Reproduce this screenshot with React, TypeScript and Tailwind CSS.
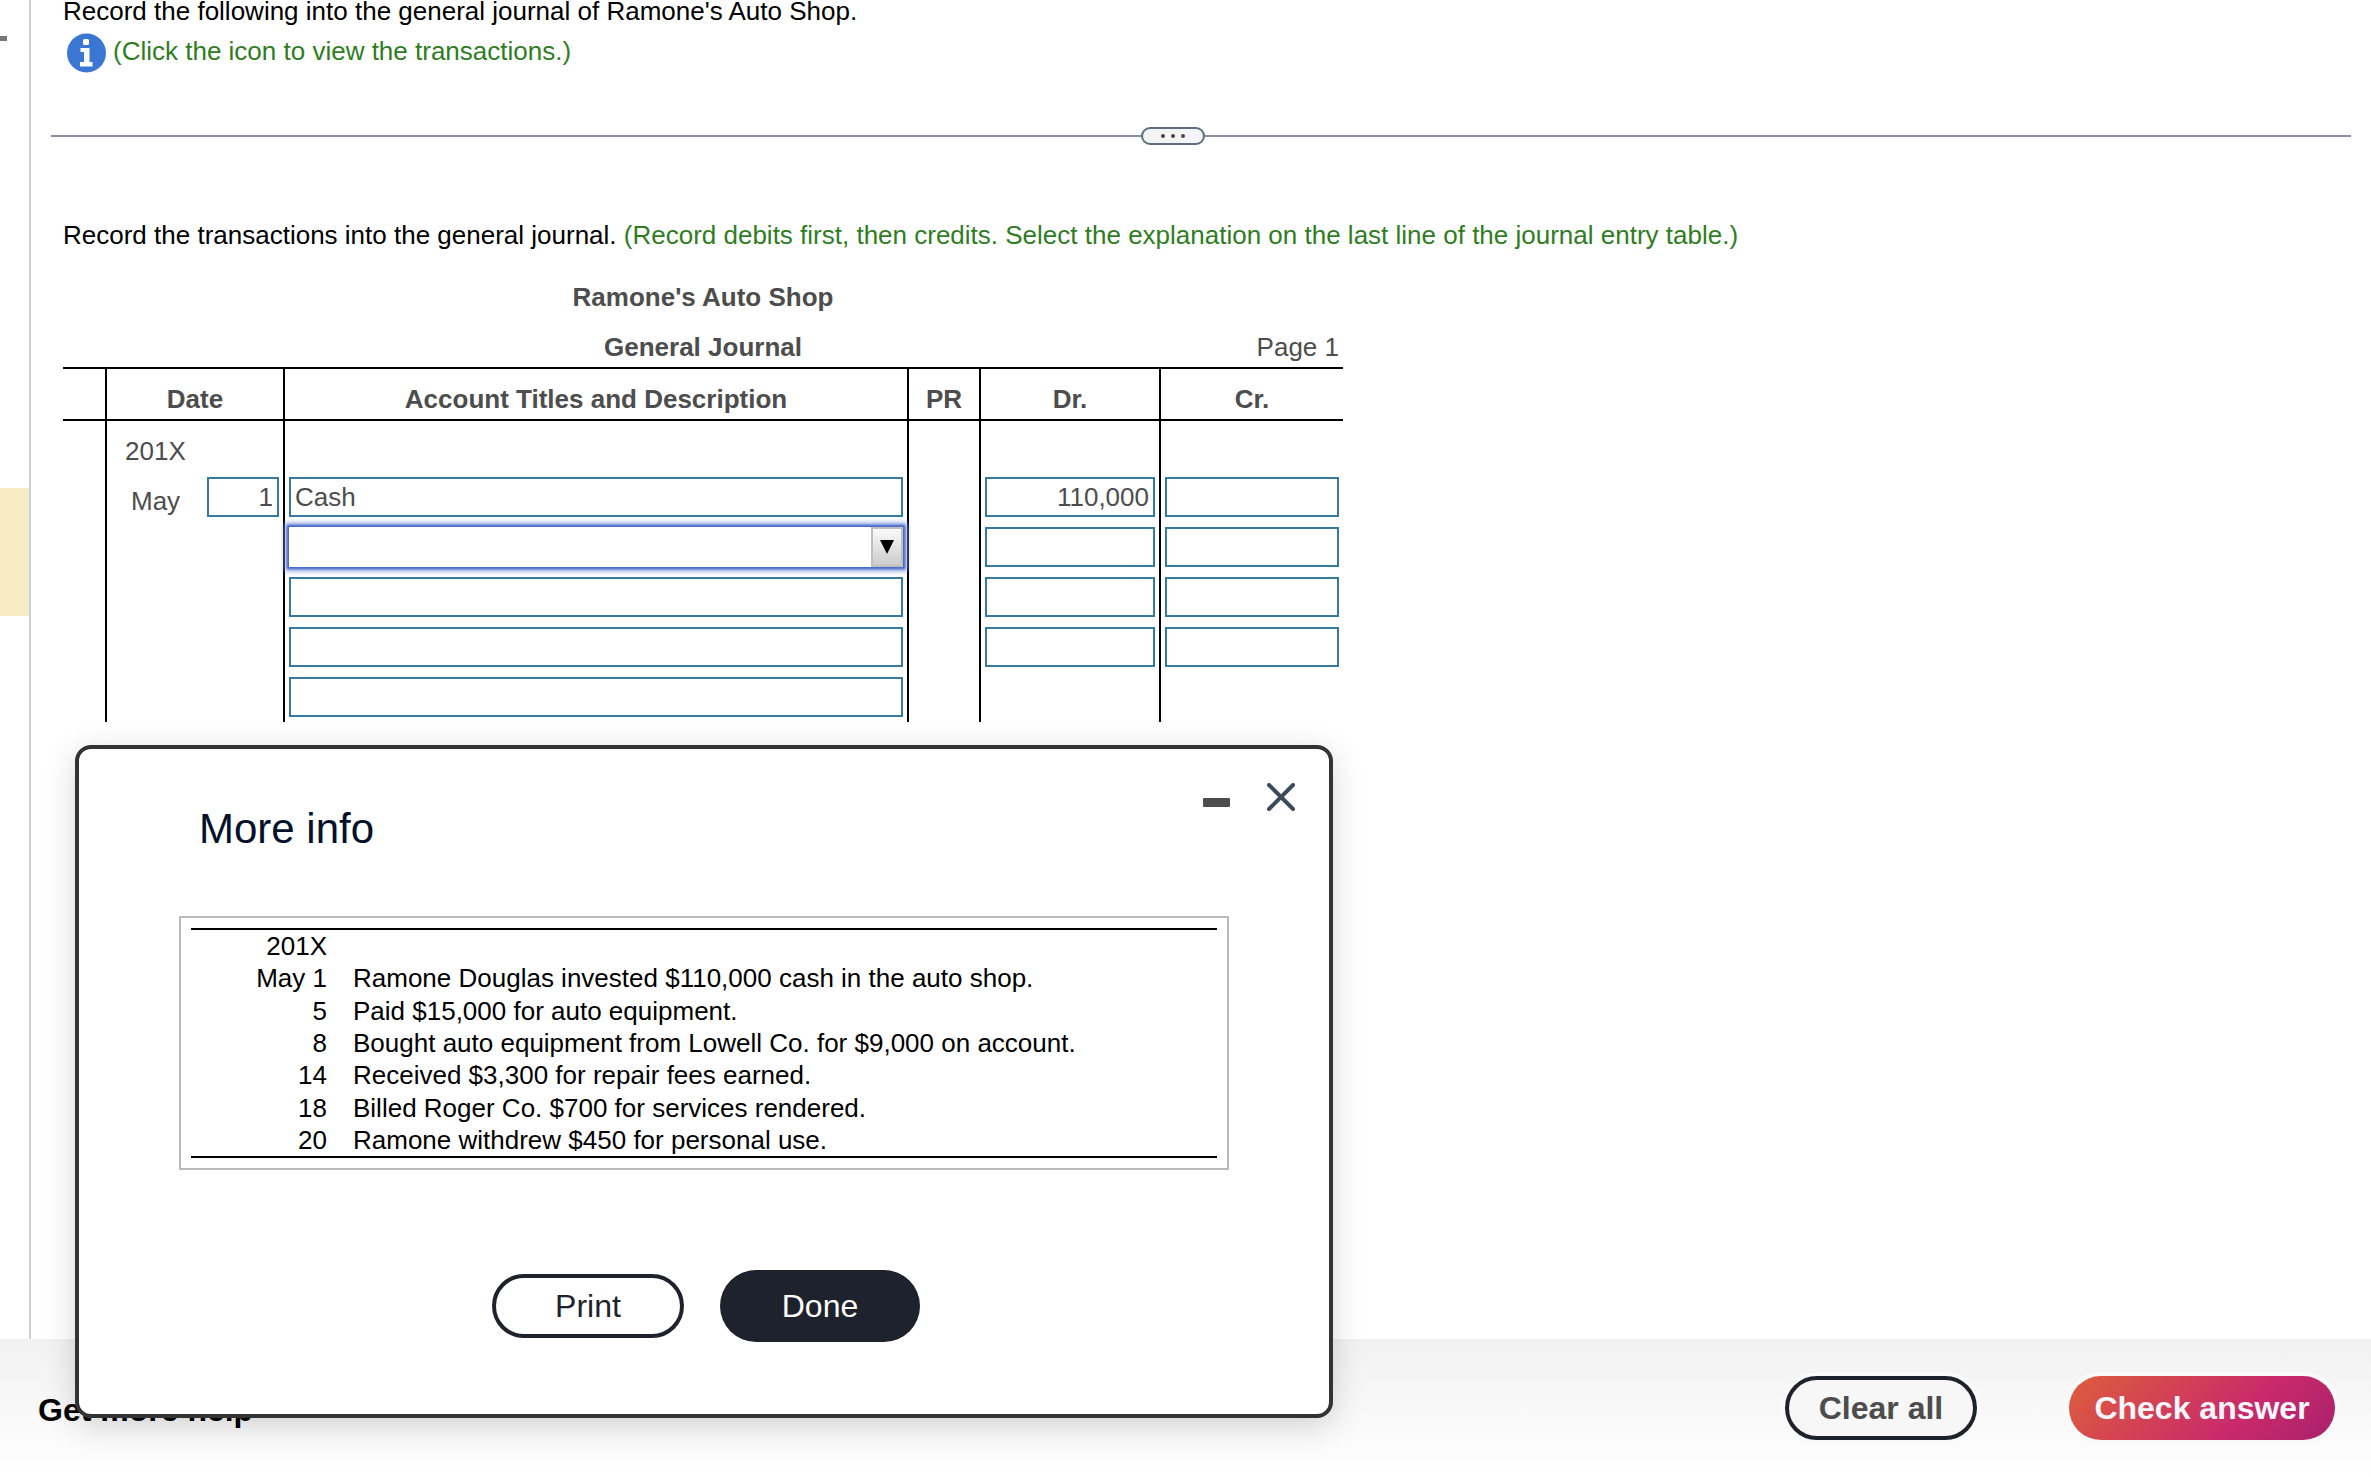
const entries = [
  { account: '', debit: '', focused: true },
  { account: '', debit: '', focused: false },
  { account: '', debit: '', focused: false },
];

const transactions = [
  { date: '201X', text: '' },
  { date: 'May 1', text: 'Ramone Douglas invested $110,000 cash in the auto shop.' },
  { date: '5', text: 'Paid $15,000 for auto equipment.' },
  { date: '8', text: 'Bought auto equipment from Lowell Co. for $9,000 on account.' },
  { date: '14', text: 'Received $3,300 for repair fees earned.' },
  { date: '18', text: 'Billed Roger Co. $700 for services rendered.' },
  { date: '20', text: 'Ramone withdrew $450 for personal use.' },
];

function Field({ label, value = '', right = false }: { label: string; value?: string; right?: boolean }) {
  return (
    <input
      type="text"
      aria-label={label}
      defaultValue={value}
      className={`block h-10 w-full border-2 border-[#367b9e] bg-white px-1 text-[#4d4d4d] outline-none ${right ? 'text-right' : ''}`}
    />
  );
}

function AccountSelect() {
  return (
    <div className="relative h-10 shadow-[0_0_2px_2px_#4668c8,0_0_5px_4px_#8b9fe0]">
      <select aria-label="Account title, line 2" className="block h-10 w-full appearance-none bg-white px-1 outline-none">
        <option value=""></option>
        <option>Accounts Payable</option>
        <option>Accounts Receivable</option>
        <option>Auto Equipment</option>
        <option>Cash</option>
        <option>Ramone Douglas, Capital</option>
        <option>Repair Fees Earned</option>
      </select>
      <span className="pointer-events-none absolute inset-y-0 right-0 flex w-8 items-center justify-center border-2 border-[#bfbfbf] bg-linear-to-b from-[#fafafa] to-[#cccccc]">
        <svg width="14" height="14" viewBox="0 0 14 14">
          <path d="M0 0h14L7 14z" fill="#000" />
        </svg>
      </span>
    </div>
  );
}

function InfoIcon() {
  return (
    <svg width="40" height="40" viewBox="0 0 40 40">
      <circle cx="19.500" cy="20" r="19.500" fill="#3b76d3" />
      <rect x="16" y="6" width="6" height="6" rx="1.500" fill="#fff" />
      <path d="M13.500 15h9v14h3v4.500H13v-4.500h4V19h-3.500z" fill="#fff" />
    </svg>
  );
}

function JournalTable() {
  const line = 'border-r-2 border-black';
  const head = 'h-[54px] border-y-2 border-black pt-2.5 font-bold';

  return (
    <section className="mt-[21px] ml-3 w-[1280px] text-[#4d4d4d]">
      <h2 className="flex h-[50px] items-center justify-center font-bold">Ramone's Auto Shop</h2>
      <div className="grid h-[45px] grid-cols-[1fr_auto_1fr] items-end leading-10">
        <span></span>
        <h3 className="font-bold">General Journal</h3>
        <span className="pr-1 text-right">Page 1</span>
      </div>
      <table className="w-full table-fixed border-separate border-spacing-0">
        <colgroup>
          <col className="w-[44px]" />
          <col className="w-[178px]" />
          <col className="w-[624px]" />
          <col className="w-[72px]" />
          <col className="w-[180px]" />
          <col className="w-[182px]" />
        </colgroup>
        <thead>
          <tr>
            <th className={`${head} border-r-2`}></th>
            <th className={`${head} border-r-2`}>Date</th>
            <th className={`${head} border-r-2`}>Account Titles and Description</th>
            <th className={`${head} border-r-2`}>PR</th>
            <th className={`${head} border-r-2`}>Dr.</th>
            <th className={head}>Cr.</th>
          </tr>
        </thead>
        <tbody>
          <tr className="h-[51px]">
            <td className={line}></td>
            <td className={`${line} pt-2 pl-[18px]`}>201X</td>
            <td className={line}></td>
            <td className={line}></td>
            <td className={line}></td>
            <td></td>
          </tr>
          <tr className="h-[50px]">
            <td className={line}></td>
            <td className={`${line} pr-1 pl-6`}>
              <div className="flex items-center justify-between">
                <span className="pt-2">May</span>
                <div className="w-[72px]">
                  <Field label="Day" value="1" right />
                </div>
              </div>
            </td>
            <td className={`${line} px-1`}><Field label="Account title, line 1" value="Cash" /></td>
            <td className={line}></td>
            <td className={`${line} px-1`}><Field label="Debit, line 1" value="110,000" right /></td>
            <td className="px-1"><Field label="Credit, line 1" right /></td>
          </tr>
          {entries.map((entry, i) => (
            <tr key={i} className="h-[50px]">
              <td className={line}></td>
              <td className={line}></td>
              <td className={`${line} px-1`}>
                {entry.focused ? <AccountSelect /> : <Field label={`Account title, line ${i + 2}`} value={entry.account} />}
              </td>
              <td className={line}></td>
              <td className={`${line} px-1`}><Field label={`Debit, line ${i + 2}`} value={entry.debit} right /></td>
              <td className="px-1"><Field label={`Credit, line ${i + 2}`} right /></td>
            </tr>
          ))}
          <tr className="h-[50px]">
            <td className={line}></td>
            <td className={line}></td>
            <td className={`${line} px-1`}><Field label="Explanation" /></td>
            <td className={line}></td>
            <td className={line}></td>
            <td></td>
          </tr>
        </tbody>
      </table>
    </section>
  );
}

function MoreInfoDialog() {
  return (
    <div
      role="dialog"
      aria-labelledby="more-info-title"
      className="absolute top-[745px] left-[75px] w-[1258px] rounded-2xl border-4 border-[#333333] bg-white pb-[72px] shadow-[0_8px_32px_rgba(0,0,0,0.16)]"
    >
      <div className="flex items-start justify-between pt-[34px] pr-[34px] pl-[120px]">
        <h2 id="more-info-title" className="mt-[22px] text-[42px] leading-[48px] text-[#05112a]">More info</h2>
        <div className="flex items-center gap-9">
          <button type="button" aria-label="Minimize" className="h-7 w-7">
            <svg width="28" height="28" viewBox="0 0 28 28">
              <rect x="0" y="15" width="27" height="9" rx="1" fill="#4d4d4d" />
            </svg>
          </button>
          <button type="button" aria-label="Close" className="h-7 w-7">
            <svg width="28" height="28" viewBox="0 0 28 28">
              <path d="M2 2l24 24M26 2L2 26" stroke="#3c4a59" strokeWidth="4" strokeLinecap="round" />
            </svg>
          </button>
        </div>
      </div>

      <div className="mx-[100px] mt-[63px] border-2 border-[#bababa] p-2.5">
        <table className="h-[230px] w-full border-y-2 border-black text-black">
          <tbody>
            {transactions.map((t) => (
              <tr key={t.date}>
                <td className="w-[136px] text-right leading-8">{t.date}</td>
                <td className="pl-[26px] leading-8">{t.text}</td>
              </tr>
            ))}
          </tbody>
        </table>
      </div>

      <div className="mt-[100px] flex items-center justify-center gap-9 pl-1 text-[32px]">
        <button type="button" className="h-16 w-48 rounded-full border-4 border-[#1e222c] bg-white text-[#1e222c]">
          Print
        </button>
        <button type="button" className="h-[72px] w-[200px] rounded-full bg-[#1e222c] text-white">
          Done
        </button>
      </div>
    </div>
  );
}

export default function App() {
  return (
    <div className="relative flex min-h-screen flex-col bg-white font-['Liberation_Sans',Arial,sans-serif] text-[26px] leading-8 text-black">
      <div className="flex flex-1">
        <aside className="w-[31px] border-r-2 border-[#c9cfde]">
          <div className="mt-9 h-[5px] w-[7px] bg-[#777777]"></div>
          <div className="mt-[447px] h-32 bg-[#f7ebc4]"></div>
        </aside>

        <main className="flex-1 px-5">
          <p className="pl-3 leading-[22px]">Record the following into the general journal of Ramone's Auto Shop.</p>
          <div className="mt-[11px] flex items-start gap-1.5 pl-4">
            <button type="button" aria-label="View the transactions">
              <InfoIcon />
            </button>
            <a href="#more-info-title" className="leading-9 text-[#2f7d1f]">(Click the icon to view the transactions.)</a>
          </div>

          <div className="mt-[54px] flex items-center">
            <div className="h-0.5 w-[47.4%] bg-[#8690a2]"></div>
            <button
              type="button"
              aria-label="Resize panels"
              className="flex h-[18px] w-16 items-center justify-center gap-1.5 rounded-full border-2 border-[#5f6e7e] bg-[#f3f4f6]"
            >
              <span className="h-1 w-1 rounded-full bg-[#444444]"></span>
              <span className="h-1 w-1 rounded-full bg-[#444444]"></span>
              <span className="h-1 w-1 rounded-full bg-[#444444]"></span>
            </button>
            <div className="h-0.5 flex-1 bg-[#8690a2]"></div>
          </div>

          <p className="mt-[74px] pl-3">
            Record the transactions into the general journal.{' '}
            <span className="text-[#2f7d1f]">
              (Record debits first, then credits. Select the explanation on the last line of the journal entry table.)
            </span>
          </p>

          <JournalTable />
        </main>
      </div>

      <footer className="flex h-[138px] items-center justify-between bg-linear-to-b from-[#f1f1f1] to-white pr-9 pl-[38px] text-[32px] font-bold">
        <a href="#help" className="pt-1">Get more help</a>
        <div className="flex gap-[92px]">
          <button type="button" className="h-16 w-48 rounded-full border-4 border-[#1e222c] bg-[#f7f7f7] text-[#4d4d4d] ring-4 ring-[#fafafa]">
            Clear all
          </button>
          <button
            type="button"
            className="h-16 w-[266px] rounded-full bg-linear-[135deg,#dc5a3f_5%,#c92a6b_65%,#a8206c] text-[#f8f5fc] ring-4 ring-[#fafafa]"
          >
            Check answer
          </button>
        </div>
      </footer>

      <MoreInfoDialog />
    </div>
  );
}
